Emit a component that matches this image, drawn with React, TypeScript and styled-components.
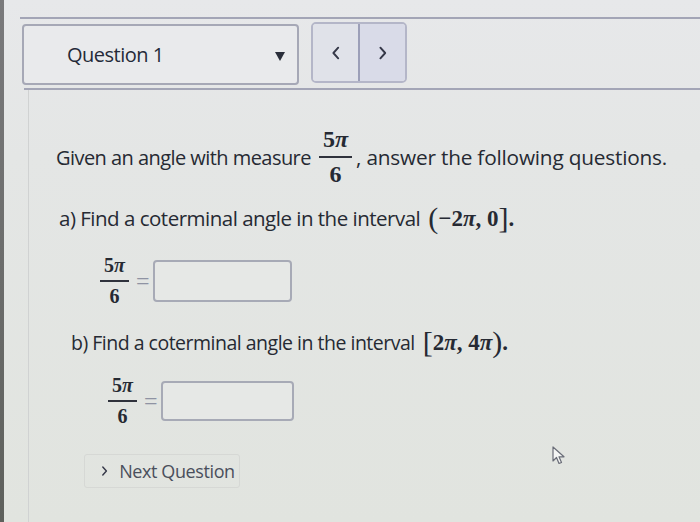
import React from "react";
import styled, { createGlobalStyle } from "styled-components";

const Global = createGlobalStyle`
  html, body { margin: 0; padding: 0; }
  body {
    width: 700px; height: 522px; overflow: hidden;
    background: linear-gradient(180deg, #e7e8ea 0%, #e4e6e5 30%, #e1e4df 100%);
    font-family: "Open Sans", "Liberation Sans", sans-serif;
    color: #2b2e38;
  }
`;

const Page = styled.div`
  display: flex;
  width: 700px;
  height: 522px;
`;

const Bezel = styled.div`
  width: 4px;
  flex: none;
  background: linear-gradient(180deg, #7a7a7c, #5e605c);
`;

const Main = styled.div`
  flex: 1;
  display: flex;
  flex-direction: column;
  min-width: 0;
`;

const Rule = styled.div<{ $top: number; $left: number }>`
  height: 2px;
  margin-top: ${(p) => p.$top}px;
  margin-left: ${(p) => p.$left}px;
  background: #a3a5b6;
`;

const Toolbar = styled.div`
  display: flex;
  align-items: flex-start;
  gap: 12px;
  padding-left: 18px;
  margin-top: 3px;
`;

const Select = styled.div`
  box-sizing: border-box;
  width: 277px;
  height: 61px;
  margin-top: 2px;
  border: 2px solid #a6a8b6;
  border-radius: 4px;
  background: #e9eaec;
  display: flex;
  align-items: center;
  justify-content: space-between;
  padding: 0 12px 0 43px;
  font-size: 20px;
  letter-spacing: -0.5px;
  color: #252a38;
`;

const Caret = styled.span`
  width: 0;
  height: 0;
  border-left: 5px solid transparent;
  border-right: 5px solid transparent;
  border-top: 9px solid #2a2e3a;
  margin-top: 3px;
`;

const NavGroup = styled.div`
  box-sizing: border-box;
  display: flex;
  width: 96px;
  height: 61px;
  border: 2px solid #b4b6c8;
  border-radius: 5px;
  overflow: hidden;
`;

const NavButton = styled.div<{ $active?: boolean }>`
  flex: 1;
  display: flex;
  align-items: center;
  justify-content: center;
  background: ${(p) => (p.$active ? "#d9dbe8" : "#e0e2e9")};
  border-left: ${(p) => (p.$active ? "2px solid #9c9fb8" : "none")};
`;

const Content = styled.div`
  flex: 1;
  margin-left: 24px;
  border-left: 1px solid #d0d2d2;
  padding-left: 27px;
  display: flex;
  flex-direction: column;
`;

const Prompt = styled.div`
  display: flex;
  align-items: center;
  margin-top: 37px;
  font-size: 20px;
  letter-spacing: -0.55px;
  color: #262a33;
`;

const Wide = styled.span`
  font-size: 20.8px;
  letter-spacing: -0.2px;
`;

const Frac = styled.span<{ $size?: number }>`
  display: inline-flex;
  flex-direction: column;
  align-items: center;
  font-family: "Liberation Serif", "DejaVu Serif", serif;
  font-weight: 700;
  font-size: ${(p) => p.$size ?? 20}px;
  line-height: 1.05;
  margin: 0 4px 0 8px;
  color: #262a33;
  letter-spacing: 0;
`;

const Num = styled.span`
  padding: 0 4px 4px;
  border-bottom: 2px solid #2f323c;
`;

const Den = styled.span`
  padding-top: 4px;
`;

const Pi = styled.i`
  font-style: italic;
`;

const Part = styled.div<{ $top: number; $indent: number; $size: number }>`
  margin-top: ${(p) => p.$top}px;
  margin-left: ${(p) => p.$indent}px;
  font-size: ${(p) => p.$size}px;
  letter-spacing: -0.5px;
  color: #262a33;
  display: flex;
  align-items: center;
`;

const Interval = styled.span`
  font-family: "Liberation Serif", "DejaVu Serif", serif;
  font-weight: 700;
  font-size: 23px;
  margin-left: 8px;
  letter-spacing: 0;
`;

const Big = styled.span`
  font-size: 30px;
  font-weight: 400;
  vertical-align: -2px;
`;

const AnswerRow = styled.div<{ $top: number; $indent: number }>`
  display: flex;
  align-items: center;
  margin-top: ${(p) => p.$top}px;
  margin-left: ${(p) => p.$indent}px;
`;

const Equals = styled.span`
  font-family: "Liberation Serif", serif;
  font-size: 24px;
  color: #8f93a3;
  margin: 0 4px 0 3px;
`;

const AnswerBox = styled.div<{ $w: number; $h: number }>`
  box-sizing: border-box;
  width: ${(p) => p.$w}px;
  height: ${(p) => p.$h}px;
  border: 2px solid #a7aab6;
  border-radius: 4px;
  background: #e6e8e6;
`;

const NextButton = styled.div`
  display: flex;
  align-items: center;
  gap: 11px;
  width: 156px;
  box-sizing: border-box;
  height: 34px;
  margin-top: 27px;
  margin-left: 28px;
  padding-left: 16px;
  border: 1px solid #d6d8d5;
  border-radius: 3px;
  font-size: 18px;
  letter-spacing: -0.4px;
  color: #4a4f5c;
`;

const Cursor = styled.svg`
  position: absolute;
  left: 552px;
  top: 446px;
`;

const Chevron = ({ dir, size = 16 }: { dir: "left" | "right"; size?: number }) => (
  <svg width={size * 0.6} height={size} viewBox="0 0 10 16">
    <path
      d={dir === "left" ? "M7.5 2.5 L2.5 8 L7.5 13.5" : "M2.5 2.5 L7.5 8 L2.5 13.5"}
      fill="none"
      stroke="#353848"
      strokeWidth="2"
      strokeLinecap="round"
      strokeLinejoin="round"
    />
  </svg>
);

const FivePiSixth = ({ size }: { size?: number }) => (
  <Frac $size={size}>
    <Num>
      5<Pi>π</Pi>
    </Num>
    <Den>6</Den>
  </Frac>
);

export default function App() {
  return (
    <>
      <Global />
      <Page>
        <Bezel />
        <Main>
          <Rule $top={17} $left={16} />
          <Toolbar>
            <Select>
              <span>Question 1</span>
              <Caret />
            </Select>
            <NavGroup>
              <NavButton>
                <Chevron dir="left" />
              </NavButton>
              <NavButton $active>
                <Chevron dir="right" />
              </NavButton>
            </NavGroup>
          </Toolbar>
          <Rule $top={3} $left={20} />
          <Content>
            <Prompt>
              Given an angle with measure
              <FivePiSixth size={24} />
              <Wide>, answer the following questions.</Wide>
            </Prompt>
            <Part $top={14} $indent={3} $size={20.5}>
              a) Find a coterminal angle in the interval
              <Interval>
                <Big>(</Big>−2<Pi>π</Pi>, 0<Big>]</Big>.
              </Interval>
            </Part>
            <AnswerRow $top={20} $indent={36}>
              <FivePiSixth size={20} />
              <Equals>=</Equals>
              <AnswerBox $w={139} $h={42} />
            </AnswerRow>
            <Part $top={18} $indent={15} $size={19.5}>
              b) Find a coterminal angle in the interval
              <Interval>
                <Big>[</Big>2<Pi>π</Pi>, 4<Pi>π</Pi>
                <Big>)</Big>.
              </Interval>
            </Part>
            <AnswerRow $top={16} $indent={44}>
              <FivePiSixth size={20} />
              <Equals>=</Equals>
              <AnswerBox $w={133} $h={40} />
            </AnswerRow>
            <NextButton>
              <Chevron dir="right" size={12} />
              <span>Next Question</span>
            </NextButton>
          </Content>
        </Main>
        <Cursor width="14" height="20" viewBox="0 0 14 20">
          <path d="M1 1 L1 15 L4.5 11.5 L7 17.5 L9.5 16.5 L7 10.8 L12 10.8 Z" fill="#f4f5f4" stroke="#6a6d78" strokeWidth="1.2" strokeLinejoin="round" />
        </Cursor>
      </Page>
    </>
  );
}
